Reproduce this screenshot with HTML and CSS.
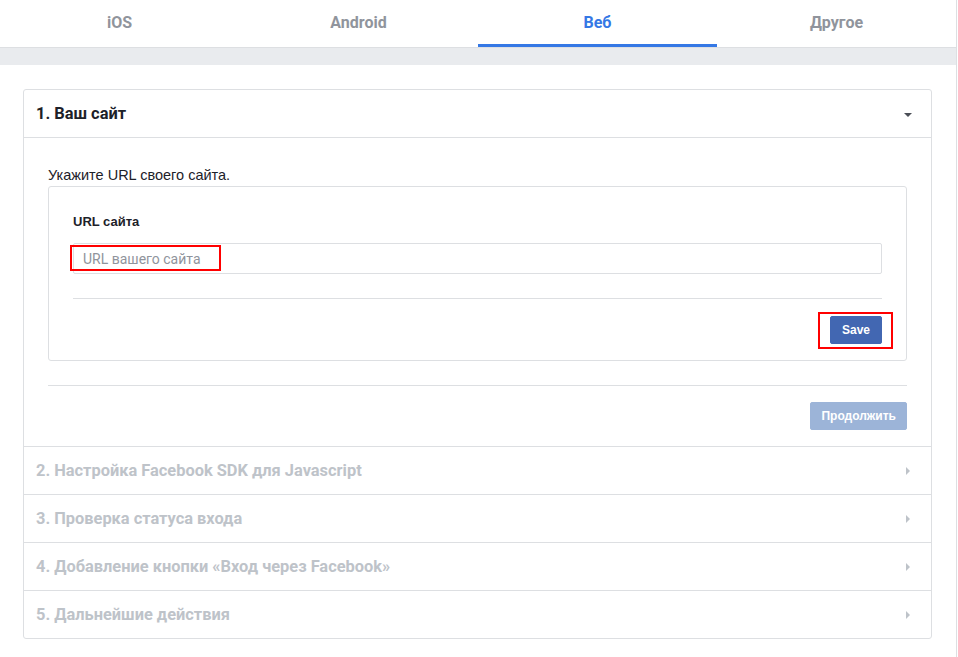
FILE: index.html
```html
<!DOCTYPE html>
<html>
<head>
	<meta charset="utf-8">
	<title>Быстрый старт: Веб</title>
	<link rel="stylesheet" href="styles.css">
</head>
<body>
<div class="qsPage">
	<div class="qsTabs">
		<a class="qsTab">iOS</a>
		<a class="qsTab">Android</a>
		<a class="qsTab qsTabActive">Веб</a>
		<a class="qsTab">Другое</a>
	</div>
	<div class="qsBand"></div>
	<div class="qsContent">
		<div class="qsCard">
			<div class="qsStep qsStepOpen">
				<div class="qsStepHead">
					<span>1. Ваш сайт</span>
					<i class="qsCaretDown"></i>
				</div>
				<div class="qsStepBody">
					<p class="qsHint">Укажите URL своего сайта.</p>
					<div class="qsBox">
						<label class="qsLabel">URL сайта</label>
						<div class="qsInputWrap">
							<input class="qsInput" type="text" placeholder="URL вашего сайта">
							<span class="qsMark qsMarkInput"></span>
						</div>
						<div class="qsBoxFoot">
							<span class="qsBtnWrap">
								<button type="button" class="qsBtn">Save</button>
								<span class="qsMark qsMarkBtn"></span>
							</span>
						</div>
					</div>
					<div class="qsStepFoot">
						<button type="button" class="qsBtn qsBtnDisabled">Продолжить</button>
					</div>
				</div>
			</div>
			<div class="qsStep"><div class="qsStepHead"><span>2. Настройка Facebook SDK для Javascript</span><i class="qsCaretRight"></i></div></div>
			<div class="qsStep"><div class="qsStepHead"><span>3. Проверка статуса входа</span><i class="qsCaretRight"></i></div></div>
			<div class="qsStep"><div class="qsStepHead"><span>4. Добавление кнопки «Вход через Facebook»</span><i class="qsCaretRight"></i></div></div>
			<div class="qsStep"><div class="qsStepHead"><span>5. Дальнейшие действия</span><i class="qsCaretRight"></i></div></div>
		</div>
	</div>
</div>
</body>
</html>
```

FILE: styles.css
```css
html, body {margin: 0; padding: 0; background: #fff;}
body {font-family: Roboto, "Liberation Sans", Arial, sans-serif; color: #1d2129;}

.qsPage {width: 957px; min-height: 657px; box-sizing: border-box; border-right: 1px solid #dddfe2;}

.qsTabs {display: flex; height: 47px; border-bottom: 1px solid #dddfe2;}
.qsTab {
	flex: 1;
	position: relative;
	text-align: center;
	line-height: 45px;
	font-size: 16px;
	font-weight: bold;
	color: #90949c;
	cursor: pointer;
}
.qsTabActive {color: #3578e5;}
.qsTabActive:after {content: ""; position: absolute; left: 0; right: 0; bottom: 0; height: 3px; background: #3578e5;}

.qsBand {height: 17px; background: #e9ebee;}

.qsContent {padding: 24px 24px 18px 23px;}

.qsCard {border: 1px solid #dddfe2; border-radius: 3px; background: #fff;}
.qsStep {border-top: 1px solid #dddfe2;}
.qsStep:first-child {border-top: none;}
.qsStepHead {
	display: flex;
	align-items: center;
	justify-content: space-between;
	height: 47px;
	padding: 0 20px 0 12px;
	font-size: 16.4px;
	font-weight: bold;
	color: #bec3c9;
}
.qsStepOpen .qsStepHead {color: #1d2129; border-bottom: 1px solid #dddfe2; height: 46px; padding-bottom: 1px;}

.qsCaretDown {width: 0; height: 0; border-left: 4px solid transparent; border-right: 4px solid transparent; border-top: 4px solid #4b4f56; margin: 4px -1px 0 0;}
.qsCaretRight {width: 0; height: 0; border-top: 4px solid transparent; border-bottom: 4px solid transparent; border-left: 4px solid #bec3c9; margin-right: 1px;}

.qsStepBody {padding: 28px 24px 16px 24px;}
.qsHint {margin: 0 0 2px 0; font-family: "Liberation Sans", Arial, sans-serif; font-size: 14.5px; line-height: 18px; color: #1d2129;}

.qsBox {border: 1px solid #dddfe2; border-radius: 3px; padding: 27px 24px 16px 24px;}
.qsLabel {display: block; font-family: "Liberation Sans", Arial, sans-serif; font-size: 13px; font-weight: bold; line-height: 16px; margin-bottom: 13px; color: #1d2129;}

.qsInputWrap {position: relative;}
.qsInput {
	display: block;
	width: 100%;
	box-sizing: border-box;
	height: 31px;
	border: 1px solid #dddfe2;
	border-radius: 2px;
	padding: 0 9px;
	font-family: Roboto, "Liberation Sans", Arial, sans-serif;
	font-size: 14px;
	color: #1d2129;
	outline: none;
}
.qsInput::placeholder {color: #90949c;}

.qsBoxFoot {border-top: 1px solid #dddfe2; margin-top: 24px; padding-top: 17px; display: flex; justify-content: flex-end;}

.qsMark {position: absolute; border: 2px solid #f00; pointer-events: none;}
.qsMarkInput {left: -3px; top: 2px; width: 147px; height: 22px;}
.qsBtnWrap {position: relative; display: inline-block;}
.qsMarkBtn {left: -12px; top: -4px; width: 71px; height: 33px;}

.qsBtn {
	display: block;
	height: 28px;
	padding: 0 11px;
	border: 1px solid #4267b2;
	border-radius: 2px;
	background: #4267b2;
	color: #fff;
	font-family: "Liberation Sans", Arial, sans-serif;
	font-size: 12px;
	font-weight: bold;
	cursor: pointer;
}
.qsBtnDisabled {background: #9cb4d8; border-color: #9cb4d8; height: 28px; padding: 0 10px; cursor: default;}

.qsStepFoot {border-top: 1px solid #dddfe2; margin-top: 24px; padding-top: 16px; display: flex; justify-content: flex-end;}
```
